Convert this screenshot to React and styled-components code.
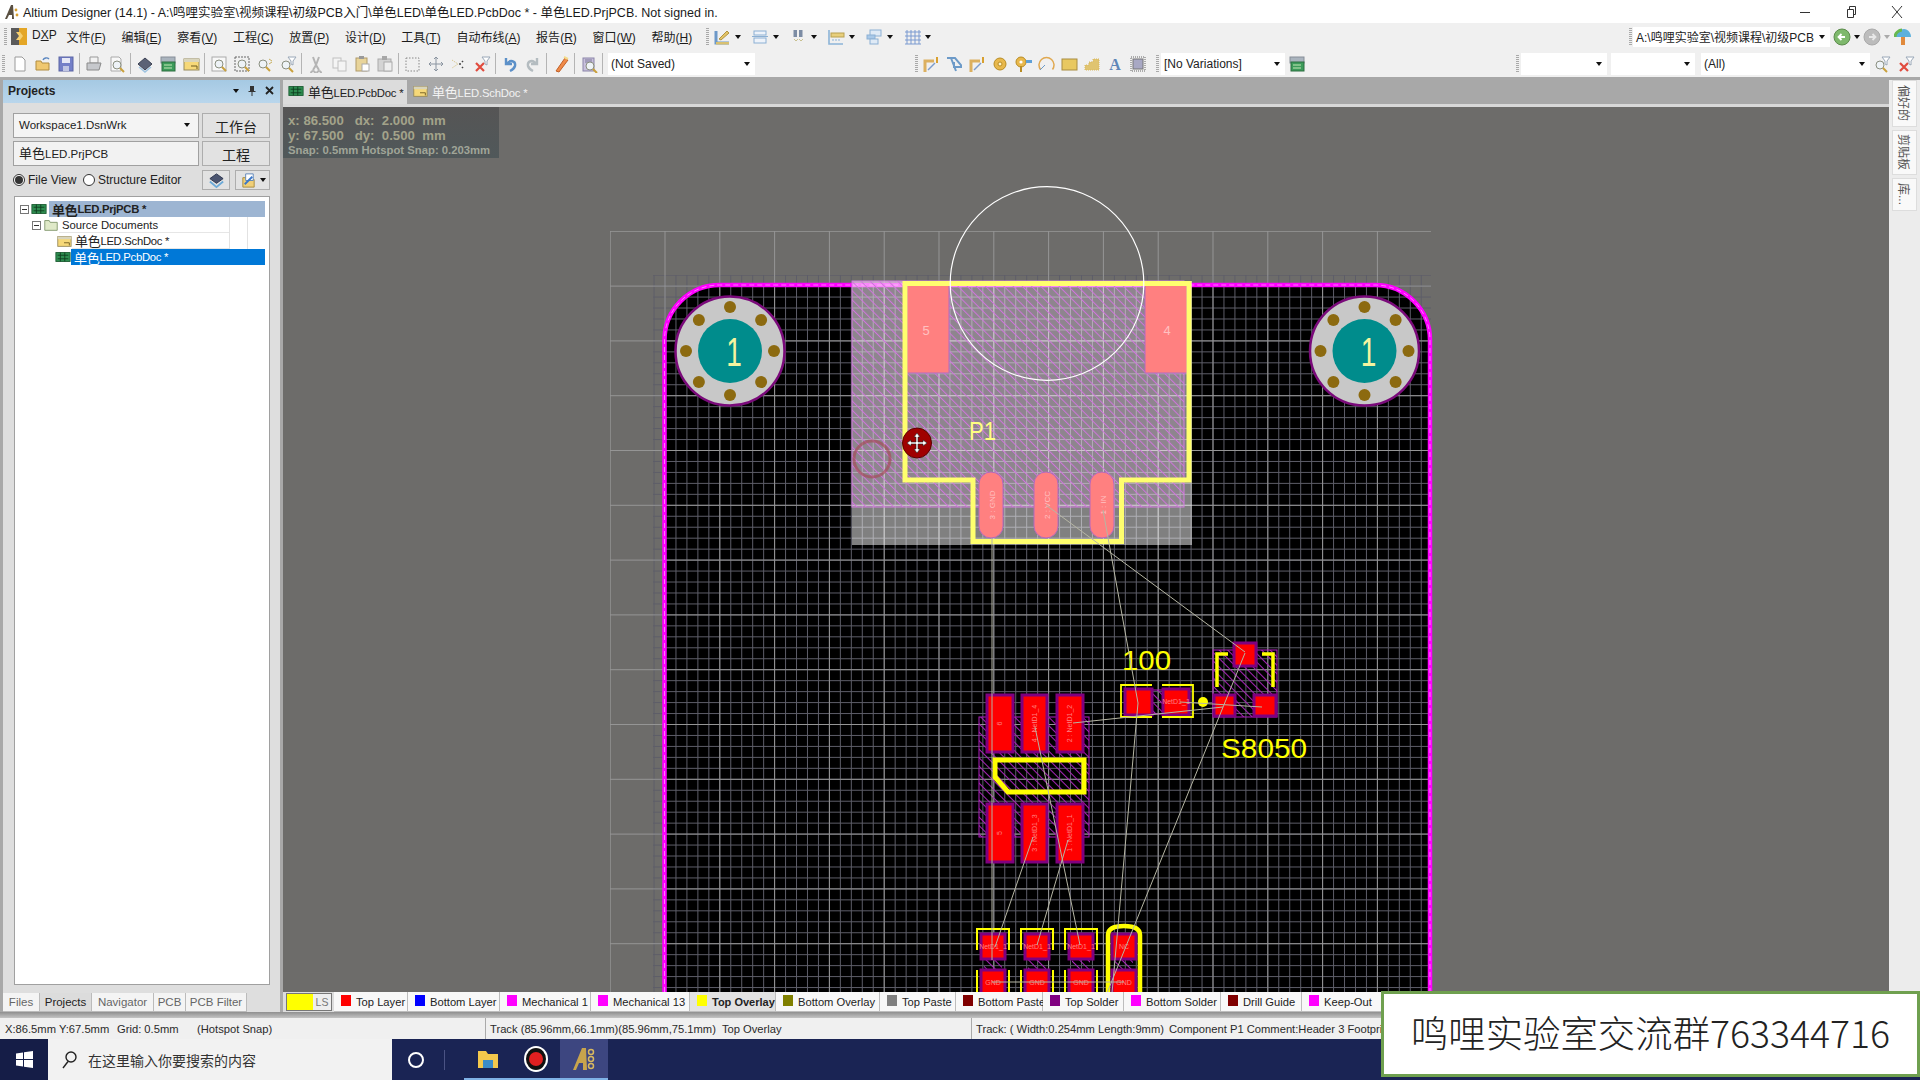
import styled, { createGlobalStyle } from "styled-components";

const Global = createGlobalStyle`
  html, body { margin: 0; padding: 0; overflow: hidden; background: #f0f0f0; }
  * { box-sizing: border-box; }
  body { font-family: "Liberation Sans", "Noto Sans CJK SC", sans-serif; font-size: 12px; color: #222; }
`;

const Page = styled.div`
  width: 1920px;
  height: 1080px;
  position: relative;
  display: flex;
  flex-direction: column;
  overflow: hidden;
`;

const TitleBar = styled.div`
  height: 23px;
  background: #fff;
  display: flex;
  align-items: center;
  padding-left: 4px;
  font-size: 12.5px;
  color: #1a1a1a;
  white-space: nowrap;
`;
const TitleText = styled.span`
  margin-left: 4px;
  flex: 1;
`;
const WinButton = styled.div`
  width: 46px;
  display: flex;
  justify-content: center;
`;

const Bar = styled.div`
  height: 27px;
  background: #f0f0f0;
  display: flex;
  align-items: center;
  white-space: nowrap;
`;
const Group = styled.div`
  display: flex;
  align-items: center;
  height: 100%;
  width: ${(p) => p.$w}px;
  flex: none;
  & > svg {
    flex: none;
  }
`;
const Grip = styled.div`
  width: 3px;
  height: 18px;
  flex: none;
  margin: 0 ${(p) => p.$right || 3}px 0 ${(p) => p.$left || 3}px;
  background: repeating-linear-gradient(to bottom, #a9a9a9 0 1px, #f0f0f0 1px 2px);
`;
const Tool = styled.div`
  width: ${(p) => p.$w || 23}px;
  height: 20px;
  flex: none;
  display: flex;
  align-items: center;
  justify-content: center;
`;
const Sep = styled.div`
  width: 5px;
  height: 21px;
  flex: none;
  &::after {
    content: "";
    display: block;
    width: 1px;
    height: 100%;
    margin-left: 2px;
    background: #b4b4b4;
  }
`;
const Caret = styled.span`
  width: 0;
  height: 0;
  flex: none;
  display: inline-block;
  border-left: 3px solid transparent;
  border-right: 3px solid transparent;
  border-top: 4px solid ${(p) => p.$color || "#111"};
`;
const MenuList = styled.div`
  display: flex;
  flex: none;
  gap: 15.7px;
  margin-left: 5px;
  color: #1c1c1c;
`;
const DxpLabel = styled.span`
  margin-right: -6px;
`;
const Combo = styled.div`
  width: ${(p) => p.$w}px;
  height: ${(p) => p.$h || 22}px;
  flex: none;
  margin-left: ${(p) => p.$ml || 0}px;
  background: #fff;
  display: flex;
  align-items: center;
  justify-content: space-between;
  padding: 0 5px 0 3px;
  font-size: 12px;
  color: #222;
`;

const Workspace = styled.div`
  height: 935px;
  display: flex;
  background: #a8a8a8;
`;
const LeftDock = styled.div`
  width: 283px;
  flex: none;
  padding: 3px 3px 0;
  display: flex;
  flex-direction: column;
`;
const PanelHead = styled.div`
  height: 23px;
  flex: none;
  background: linear-gradient(#a5c9e3, #b9d6ec);
  display: flex;
  align-items: center;
  padding: 0 6px 2px 5px;
  font-weight: bold;
  color: #222;
`;
const PanelTitle = styled.span`
  flex: 1;
`;
const HeadGlyphs = styled.div`
  display: flex;
  align-items: center;
  gap: 8px;
`;
const PanelBody = styled.div`
  flex: 1;
  background: #dedede;
  padding: 10px 10px 8px;
  display: flex;
  flex-direction: column;
  gap: 3px;
`;
const FormRow = styled.div`
  height: ${(p) => p.$h || 25}px;
  flex: none;
  display: flex;
  gap: 3px;
`;
const Field = styled.div`
  width: 186px;
  background: ${(p) => (p.$plain ? "#f2f2f2" : "#f4f4f4")};
  border: 1px solid #a0a0a0;
  display: flex;
  align-items: center;
  justify-content: space-between;
  padding: 0 8px 2px 5px;
  font-size: 11.5px;
`;
const PanelBtn = styled.div`
  width: ${(p) => p.$w || 68}px;
  background: #e2e2e2;
  border: 1px solid #adadad;
  display: flex;
  align-items: center;
  justify-content: center;
  gap: 3px;
  font-size: ${(p) => p.$fs || 14}px;
`;
const RadioRow = styled.div`
  height: 20px;
  flex: none;
  margin-top: 1px;
  display: flex;
  align-items: center;
`;
const Radio = styled.span`
  width: 12px;
  height: 12px;
  border-radius: 50%;
  border: 1px solid #333;
  background: #fff;
  flex: none;
  display: flex;
  align-items: center;
  justify-content: center;
  margin-right: 3px;
  &::after {
    content: "";
    width: 8px;
    height: 8px;
    border-radius: 50%;
    background: ${(p) => (p.$on ? "#333" : "transparent")};
  }
`;
const RadioLabel = styled.span`
  width: ${(p) => p.$w}px;
  flex: none;
`;
const RadioButtons = styled.div`
  margin-left: auto;
  height: 100%;
  display: flex;
  gap: 5px;
`;
const Tree = styled.div`
  flex: 1;
  width: 256px;
  align-self: flex-end;
  margin-top: 3px;
  background: #fff;
  border: 1px solid #a0a0a0;
  padding: 4px 4px 0 5px;
  font-size: 11.3px;
`;
const TreeRow = styled.div`
  height: 16px;
  display: flex;
  align-items: center;
  padding-left: ${(p) => p.$indent}px;
  white-space: nowrap;
`;
const Expander = styled.span`
  width: 9px;
  height: 9px;
  flex: none;
  border: 1px solid #777;
  margin-right: 2px;
  position: relative;
  &::after {
    content: "";
    position: absolute;
    left: 1px;
    right: 1px;
    top: 3px;
    height: 1px;
    background: #333;
  }
`;
const TreeLabel = styled.div`
  flex: 1;
  height: 100%;
  display: flex;
  align-items: center;
  padding-left: 3px;
  margin-left: ${(p) => p.$ml || 0}px;
  font-weight: ${(p) => (p.$bold ? "bold" : "normal")};
  background: ${(p) => (p.$bg ? p.$bg : "transparent")};
  color: ${(p) => (p.$fg ? p.$fg : "#222")};
  border-bottom: ${(p) => (p.$line ? "1px solid #e6e6e6" : "none")};
  letter-spacing: ${(p) => (p.$doc ? "-0.3px" : "0")};
  white-space: pre;
`;
const Cjk = styled.span`
  font-size: 13px;
`;
const Cell = styled.span`
  width: 18px;
  height: 100%;
  flex: none;
  border-left: 1px solid #e2e2e2;
`;
const DockTabs = styled.div`
  height: 19px;
  flex: none;
  display: flex;
  background: #dedede;
`;
const DockTab = styled.div`
  width: ${(p) => p.$w}px;
  flex: none;
  background: ${(p) => (p.$on ? "#dcdcdc" : "#f4f4f4")};
  color: ${(p) => (p.$on ? "#222" : "#666")};
  border-right: 1px solid #bbb;
  border-bottom: 1px solid #bbb;
  display: flex;
  align-items: center;
  justify-content: center;
  font-size: 11.5px;
`;

const DocArea = styled.div`
  flex: 1;
  display: flex;
  flex-direction: column;
  min-width: 0;
`;
const DocTabs = styled.div`
  height: 27px;
  flex: none;
  padding-top: 3px;
  display: flex;
`;
const DocTab = styled.div`
  width: ${(p) => p.$w}px;
  flex: none;
  background: ${(p) => (p.$on ? "#dcdcdc" : "transparent")};
  color: ${(p) => (p.$on ? "#222" : "#f2f2f2")};
  display: flex;
  align-items: center;
  gap: 4px;
  padding: 0 0 2px 5px;
  font-size: 11.3px;
  white-space: pre;
`;
const DocLabel = styled.span`
  white-space: pre;
  letter-spacing: -0.2px;
`;
const Strip = styled.div`
  height: 3px;
  flex: none;
  background: #d8d8d8;
`;
const Canvas = styled.div`
  flex: 1;
  position: relative;
  background: #6d6c6a;
  overflow: hidden;
`;
const BoardSvg = styled.svg`
  display: block;
  width: 1606px;
  height: 885px;
`;
const Readout = styled.div`
  position: absolute;
  left: 0;
  top: 0;
  width: 216px;
  height: 51px;
  padding: 6px 0 0 5px;
  background: linear-gradient(#565555, #50585a);
  color: #a3a38a;
  font-weight: bold;
  font-size: 13.2px;
  line-height: 15px;
`;
const ReadoutLine = styled.div`
  white-space: pre;
`;
const ReadoutHint = styled.div`
  font-size: 11.3px;
  line-height: 13px;
  margin-top: 1px;
  color: #a0a598;
`;
const LayerBar = styled.div`
  height: 20px;
  flex: none;
  background: #dcdcdc;
  display: flex;
  padding-left: 3px;
  white-space: nowrap;
`;
const LsBox = styled.div`
  width: 46px;
  height: 18px;
  flex: none;
  margin-top: 1px;
  margin-right: 2px;
  display: flex;
  border: 1px solid #777;
  background: #eee;
`;
const LsColor = styled.div`
  width: 26px;
  background: #ffff00;
`;
const LsText = styled.div`
  flex: 1;
  font-size: 10.5px;
  color: #777;
  display: flex;
  align-items: center;
  justify-content: center;
`;
const LayerTab = styled.div`
  width: ${(p) => p.$w}px;
  flex: none;
  display: flex;
  align-items: center;
  gap: 5px;
  padding: 1px 0 0 7px;
  background: ${(p) => (p.$on ? "#e2e2e2" : "#f8f8f8")};
  border-right: 1px solid #bdbdbd;
  border-bottom: 1px solid #bdbdbd;
  font-size: ${(p) => (p.$on ? "11px" : "11.2px")};
  font-weight: ${(p) => (p.$on ? "bold" : "normal")};
`;
const Swatch = styled.span`
  width: 10px;
  height: 11px;
  flex: none;
  margin-top: -3px;
  background: ${(p) => p.$c};
`;
const RightDock = styled.div`
  width: 31px;
  flex: none;
  margin-top: 3px;
  background: #ececec;
  padding: 0 3px;
  display: flex;
  flex-direction: column;
  gap: 3px;
`;
const SideTab = styled.div`
  height: ${(p) => p.$h}px;
  background: #f9f9f9;
  border: 1px solid #dddddd;
  display: flex;
  align-items: center;
  justify-content: center;
  font-size: 12px;
  color: #555;
  writing-mode: vertical-rl;
  text-orientation: sideways;
`;

const Divider = styled.div`
  height: 6px;
  flex: none;
  background: linear-gradient(#8f8f8f, #c4c4c4);
`;
const StatusBar = styled.div`
  height: 21px;
  flex: none;
  background: #f0f0f0;
  display: flex;
  align-items: center;
  font-size: 11.2px;
  white-space: nowrap;
  overflow: hidden;
  color: #2a2a2a;
`;
const StatusCell = styled.div`
  width: ${(p) => p.$w}px;
  flex: none;
  height: 100%;
  display: flex;
  align-items: center;
  padding-left: ${(p) => p.$pad || 0}px;
  border-right: ${(p) => (p.$edge ? "1px solid #aaa" : "none")};
`;

const Taskbar = styled.div`
  height: 41px;
  flex: none;
  background: #1a2454;
  display: flex;
  align-items: stretch;
`;
const StartBtn = styled.div`
  width: 48px;
  background: #151d47;
  display: flex;
  align-items: center;
  justify-content: center;
`;
const SearchBox = styled.div`
  width: 344px;
  background: #f2f2f2;
  display: flex;
  align-items: center;
  gap: 11px;
  padding-left: 13px;
  font-size: 14px;
  color: #333;
`;
const TaskSlot = styled.div`
  width: ${(p) => p.$w || 48}px;
  display: flex;
  align-items: center;
  justify-content: center;
  background: ${(p) => (p.$on ? "#3d4680" : "transparent")};
  border-bottom: ${(p) => (p.$run ? "2px solid #7fb2e6" : "none")};
`;
const TaskDivider = styled.div`
  width: 1px;
  height: 20px;
  align-self: center;
  background: #4b5384;
  margin: 0 19px 0 4px;
`;
const Watermark = styled.div`
  position: absolute;
  left: 1381px;
  top: 991px;
  width: 539px;
  height: 86px;
  background: #fff;
  border: 3px solid #6fa04f;
  padding-bottom: 4px;
  display: flex;
  align-items: center;
  justify-content: center;
  font-family: "Noto Sans CJK SC", "Liberation Sans", sans-serif;
  font-size: 37.4px;
  font-weight: 300;
  color: #222;
  white-space: nowrap;
`;

const Mag = ({ x = 9, y = 9 }) => (
  <g>
    <circle cx={x} cy={y} r="4" fill="#eef3f7" stroke="#8a8f80" />
    <path d={`M${x + 3} ${y + 3}l4 4`} stroke="#c9a03c" strokeWidth="2" />
  </g>
);
const Funnel = ({ c = "#9aa8b8" }) => <path d="M9 2h8l-3 4v4l-2-1V6z" fill="#fff" stroke={c} />;

const icons = {
  new: <path d="M4 2h7l3 3v11H4z" fill="#fff" stroke="#9a9a9a" />,
  open: (
    <g>
      <path d="M2 6h5l1 2h7v7H2z" fill="#f0c870" stroke="#b08c40" />
      <path d="M9 5c1-2 4-3 6-1" fill="none" stroke="#5a86c0" strokeWidth="1.4" />
    </g>
  ),
  save: (
    <g>
      <rect x="2" y="2" width="14" height="14" fill="#7480c8" stroke="#5a64a4" />
      <rect x="5" y="3" width="8" height="5" fill="#e6e8f6" />
      <rect x="6" y="11" width="6" height="5" fill="#c0c6e4" />
    </g>
  ),
  print: (
    <g>
      <path d="M5 2h8v6H5z" fill="#f2f2f2" stroke="#999" />
      <path d="M2 8h14l-2 7H2z" fill="#c6c8cc" stroke="#8a8a8a" />
    </g>
  ),
  preview: (
    <g>
      <path d="M3 2h8l2 2v12H3z" fill="#f8f8f8" stroke="#aaa" />
      <Mag x={9} y={10} />
    </g>
  ),
  layers: (
    <g>
      <path d="M9 3l7 6-7 6-7-6z" fill="#5b6276" stroke="#3c4254" />
      <path d="M3 12l6 5 6-5" fill="none" stroke="#9ec3e0" strokeWidth="1.4" />
    </g>
  ),
  pcb: (
    <g>
      <rect x="2" y="2" width="14" height="6" fill="#aab4be" stroke="#868e98" />
      <rect x="3" y="7" width="13" height="9" fill="#3c9b5a" stroke="#2c6e40" />
      <path d="M5 10h8M5 13h8" stroke="#c6e8b8" />
    </g>
  ),
  pcbSmall: (
    <g>
      <rect x="1" y="4" width="16" height="10" fill="#2e8d50" stroke="#1c5c32" />
      <path d="M3 7h12M3 11h12M6 4v10M11 4v10" stroke="#0f3d1e" />
    </g>
  ),
  sch: (
    <g>
      <rect x="2" y="4" width="15" height="11" fill="#f6d878" stroke="#96895a" />
      <rect x="2" y="4" width="15" height="3" fill="#d8d4bc" />
      <path d="M9 11h6v3" fill="none" stroke="#6d5a20" />
    </g>
  ),
  folder: <path d="M2 4h5l1 2h8v9H2z" fill="#dfe9c8" stroke="#80966a" />,
  zoomA: (
    <g>
      <rect x="2" y="2" width="14" height="14" fill="#f8f8f8" stroke="#aaa" />
      <Mag />
    </g>
  ),
  zoomB: (
    <g>
      <rect x="2" y="2" width="14" height="14" fill="none" stroke="#666" strokeDasharray="2 1" />
      <Mag />
    </g>
  ),
  zoomC: (
    <g>
      <Mag x={7} y={9} />
      <path d="M13 4l3 2M13 9l3-2" stroke="#c8b060" fill="none" />
    </g>
  ),
  zoomD: (
    <g>
      <Mag x={7} y={10} />
      <Funnel />
    </g>
  ),
  zoomRed: (
    <g>
      <path d="M3 8l8 8M11 8l-8 8" stroke="#e04b3e" strokeWidth="2.2" />
      <Funnel />
    </g>
  ),
  cut: <path d="M6 2l3 8 3-8M6 16a2 2 0 1 0 .1 0M12 16a2 2 0 1 0 .1 0M9 10l-3 5M9 10l3 5" fill="none" stroke="#b4b4b4" strokeWidth="2" />,
  copy: (
    <g>
      <rect x="3" y="3" width="8" height="10" fill="#f4f4f4" stroke="#c0c0c0" />
      <rect x="8" y="6" width="8" height="10" fill="#f4f4f4" stroke="#c0c0c0" />
    </g>
  ),
  paste: (
    <g>
      <rect x="3" y="3" width="11" height="13" fill="#e8d49a" stroke="#b09a68" />
      <rect x="9" y="9" width="7" height="7" fill="#fff" stroke="#aaa" />
      <rect x="6" y="1" width="5" height="3" fill="#999" />
    </g>
  ),
  pasteB: (
    <g>
      <rect x="2" y="4" width="13" height="12" fill="#d4d4d4" stroke="#aaa" />
      <rect x="6" y="1" width="5" height="4" fill="#a8a8a8" />
      <rect x="8" y="7" width="8" height="9" fill="#eee" stroke="#aaa" />
    </g>
  ),
  select: <rect x="2" y="3" width="13" height="13" fill="none" stroke="#888" strokeDasharray="1.5 1.5" />,
  move: <path d="M9 2v14M2 9h14M7 4l2-2 2 2M7 14l2 2 2-2M4 7L2 9l2 2M14 7l2 2-2 2" fill="none" stroke="#8a94a0" />,
  deselect: (
    <g>
      <path d="M2 5l6 4-6 4" fill="none" stroke="#d8c890" strokeDasharray="1.5 1" />
      <path d="M12 6l1 1M12 12l1 1M9 9l2 0" stroke="#444" strokeWidth="1.6" />
    </g>
  ),
  undo: <path d="M5 3v6h6M6 9c3-5 9-3 8 2-1 3-3 4-5 5" fill="none" stroke="#5c90c8" strokeWidth="2.4" />,
  redo: <path d="M13 3v6H7M12 9C9 4 3 6 4 11c1 3 3 4 5 5" fill="none" stroke="#b4bcc0" strokeWidth="2.4" />,
  pen: (
    <g>
      <path d="M4 16l9-13 3 2-9 12z" fill="#f08a48" stroke="#c06028" />
      <path d="M12 2l4 2" stroke="#f4dc8c" strokeWidth="2" />
    </g>
  ),
  iso: (
    <g>
      <rect x="3" y="3" width="11" height="13" fill="#c8c0dc" stroke="#8a84a8" />
      <path d="M5 5h7M5 7h7" stroke="#7c7898" />
      <Mag x={10} y={11} />
    </g>
  ),
  ruler: (
    <g>
      <path d="M3 3v12h13" fill="none" stroke="#6c98c8" strokeWidth="3" />
      <path d="M6 11l8-8 2 2-8 7z" fill="#e4c468" stroke="#b09440" />
      <rect x="3" y="14" width="13" height="2.5" fill="#d8c070" />
    </g>
  ),
  align: (
    <g>
      <rect x="3" y="3" width="12" height="4" fill="#eef3fa" stroke="#8cb0d4" />
      <rect x="3" y="10" width="12" height="5" fill="#eef3fa" stroke="#8cb0d4" />
      <path d="M1 8.5h16" stroke="#8cb0d4" />
    </g>
  ),
  binoc: (
    <g>
      <rect x="4.500" y="2" width="3.500" height="7" fill="#7c8ca4" />
      <rect x="10" y="2" width="3.500" height="7" fill="#7c8ca4" />
      <path d="M5 11l2 2 2-2M10 11l2 2 2-2" fill="none" stroke="#c8c090" />
    </g>
  ),
  measure: (
    <g>
      <path d="M2 2v14h14" fill="none" stroke="#8cb4d8" strokeWidth="1.6" />
      <rect x="4" y="5" width="13" height="4" fill="#e8cf7c" stroke="#b8a050" />
      <path d="M5 12h8" stroke="#8cb4d8" strokeDasharray="2 1" />
    </g>
  ),
  stack: (
    <g>
      <rect x="5" y="2" width="11" height="6" fill="#dfeaf6" stroke="#8cb0d4" />
      <rect x="2" y="7" width="8" height="4" fill="#a8c8e8" stroke="#8cb0d4" />
      <rect x="5" y="11" width="8" height="5" fill="#dfeaf6" stroke="#8cb0d4" />
    </g>
  ),
  grid: <path d="M4 2v14M8 2v14M12 2v14M16 2v14M2 4h16M2 8h16M2 12h16M2 16h16" stroke="#7a9ad0" fill="none" />,
  routeA: (
    <g>
      <path d="M3 17V6h9" fill="none" stroke="#dcb060" strokeWidth="3" />
      <path d="M6 15L13 8" stroke="#7c9ccc" strokeWidth="1.5" />
      <path d="M15 2v6" stroke="#d8a030" strokeWidth="2" />
    </g>
  ),
  routeB: <path d="M2 3h8l6 7v2H9v-5M6 3l5 13" fill="none" stroke="#6c9ac8" strokeWidth="2" />,
  viaPad: (
    <g>
      <circle cx="9" cy="9" r="6" fill="#e8b84c" stroke="#b88c24" />
      <circle cx="9" cy="9" r="2" fill="#fff3c8" stroke="#b88c24" />
    </g>
  ),
  via: (
    <g>
      <circle cx="7" cy="7" r="5" fill="#e8b84c" stroke="#b88c24" />
      <circle cx="7" cy="7" r="1.6" fill="#fff" />
      <rect x="6" y="11" width="2" height="6" fill="#b88c24" />
      <rect x="12" y="5" width="6" height="3" fill="#5fa0d8" />
    </g>
  ),
  arc: (
    <g>
      <path d="M3.500 14.500a7.500 7.500 0 1 1 12 0" fill="none" stroke="#e0a850" strokeWidth="1.5" />
      <path d="M3 15l5-5" stroke="#6c9ac8" />
    </g>
  ),
  fill: <rect x="2" y="4" width="15" height="11" fill="#e8c860" stroke="#a88c40" />,
  poly: <path d="M2 15V10h4V7h4V4h6v11z" fill="#e0c470" stroke="#d8b860" strokeDasharray="1 1" />,
  textA: <text x="9" y="15" textAnchor="middle" fontSize="16" fontFamily="Liberation Serif, serif" fontWeight="bold" fill="#5f86b8">A</text>,
  chip: (
    <g>
      <rect x="4" y="4" width="10" height="10" fill="#a8a8c4" stroke="#777" />
      <rect x="2" y="2" width="14" height="14" fill="none" stroke="#666" strokeDasharray="1 1" />
    </g>
  ),
  filterMag: (
    <g>
      <Mag x={7} y={10} />
      <Funnel />
    </g>
  ),
  back: (
    <g>
      <circle cx="9" cy="9" r="8" fill="#7eb86c" stroke="#5c8c4c" />
      <path d="M12 9H6M8.5 6L5.5 9l3 3" fill="none" stroke="#fff" strokeWidth="1.8" />
    </g>
  ),
  forward: (
    <g>
      <circle cx="9" cy="9" r="8" fill="#bcbcbc" stroke="#aaa" />
      <path d="M6 9h6M9.5 6l3 3-3 3" fill="none" stroke="#e8e8e8" strokeWidth="1.8" />
    </g>
  ),
  home: (
    <g>
      <path d="M1 9c0-5 5-8 9-8s7 4 7 8z" fill="#5cb0dc" />
      <path d="M1 9c0-4 4-7 7-7" fill="none" stroke="#68b850" strokeWidth="3" />
      <rect x="7" y="9" width="4" height="8" fill="#e08a3c" />
    </g>
  ),
  bluePage: (
    <g>
      <path d="M3 6h5l1 2h6v8H3z" fill="#f0cf78" stroke="#a88c40" />
      <path d="M6 2h8v7H6z" fill="#fff" stroke="#5f86b8" />
      <path d="M5 13L13 5" stroke="#3c78c8" strokeWidth="2" />
    </g>
  ),
  stackBook: (
    <g>
      <path d="M9 2l7 5-7 5-7-5z" fill="#4a5470" stroke="#2c344c" />
      <path d="M2 10l7 6 7-6" fill="none" stroke="#6caad8" strokeWidth="2" />
    </g>
  ),
};

const Icon = ({ name, size = 18 }) => (
  <svg width={size} height={size} viewBox="0 0 18 18">
    {icons[name]}
  </svg>
);

const Tools = ({ names, w }) =>
  names.map((n) => (
    <Tool key={n} $w={w}>
      <Icon name={n} />
    </Tool>
  ));

const menus = [
  ["文件", "F"],
  ["编辑", "E"],
  ["察看", "V"],
  ["工程", "C"],
  ["放置", "P"],
  ["设计", "D"],
  ["工具", "T"],
  ["自动布线", "A"],
  ["报告", "R"],
  ["窗口", "W"],
  ["帮助", "H"],
];

const layers = [
  ["Top Layer", "#ff0000", 74],
  ["Bottom Layer", "#0000ff", 92],
  ["Mechanical 1", "#ff00ff", 91],
  ["Mechanical 13", "#ff00ff", 99],
  ["Top Overlay", "#ffff00", 86, true],
  ["Bottom Overlay", "#808000", 104],
  ["Top Paste", "#808080", 76],
  ["Bottom Paste", "#800000", 87],
  ["Top Solder", "#800080", 81],
  ["Bottom Solder", "#ff00ff", 97],
  ["Drill Guide", "#800000", 81],
  ["Keep-Out", "#ff00ff", 80],
];

const Pad = ({ x, y, w, h, label, rotate }) => (
  <g>
    <rect x={x} y={y} width={w} height={h} fill="#ff0000" stroke="#800080" strokeWidth="3" />
    {label && (
      <text
        x={x + w / 2}
        y={y + h / 2 + 2}
        fontSize="7"
        textAnchor="middle"
        fill="#ff8080"
        fontFamily="Liberation Sans, sans-serif"
        transform={rotate ? `rotate(-90 ${x + w / 2} ${y + h / 2})` : undefined}
      >
        {label}
      </text>
    )}
  </g>
);

const MountHole = ({ cx, cy }) => (
  <g>
    <circle cx={cx} cy={cy} r="54.5" fill="#c8c8c8" stroke="#7a0a7a" strokeWidth="2.5" />
    {[0, 1, 2, 3, 4, 5, 6, 7].map((i) => (
      <circle
        key={i}
        cx={cx + 44 * Math.cos((i * Math.PI) / 4)}
        cy={cy + 44 * Math.sin((i * Math.PI) / 4)}
        r="6"
        fill="#8c6a10"
      />
    ))}
    <circle cx={cx} cy={cy} r="32" fill="#008c8c" />
    <text
      textAnchor="middle"
      fontSize="40"
      fill="#f4f4a0"
      fontFamily="Liberation Sans, sans-serif"
      transform={`translate(${cx + 4} ${cy + 15}) scale(0.7 1)`}
    >
      1
    </text>
  </g>
);

const ratsnest = [
  [992, 538, 992, 960],
  [1046, 505, 1245, 652],
  [1103, 510, 1138, 703],
  [1138, 703, 1112, 993],
  [1245, 653, 1107, 993],
  [1073, 723, 1223, 707],
  [1180, 702, 1262, 707],
  [1035, 727, 1080, 945],
  [1033, 837, 995, 947],
  [1068, 840, 1037, 945],
  [992, 982, 1124, 982],
];

const Board = () => (
  <BoardSvg viewBox="283 107 1606 885">
    <defs>
      <pattern id="fine" x="664.5" y="285.6" width="10.96" height="10.96" patternUnits="userSpaceOnUse">
        <path d="M0 0.5H10.96M0.5 0V10.96" stroke="#5d5d68" strokeWidth="1" fill="none" />
      </pattern>
      <pattern id="coarse" x="664.5" y="285.6" width="54.8" height="54.8" patternUnits="userSpaceOnUse">
        <path d="M0 0.5H54.8M0.5 0V54.8" stroke="#959595" strokeWidth="1" fill="none" />
      </pattern>
      <pattern id="hatchPink" width="6.500" height="6.500" patternUnits="userSpaceOnUse" patternTransform="rotate(-45)">
        <path d="M0 0V6.500" stroke="#cf74dc" strokeWidth="2" />
      </pattern>
      <pattern id="hatchDark" width="6" height="6" patternUnits="userSpaceOnUse" patternTransform="rotate(-45)">
        <path d="M0 0V6" stroke="#a826b8" strokeWidth="2" />
      </pattern>
    </defs>

    <path d="M664.5 1000V340A55 55 0 0 1 719.5 285H1375A55 55 0 0 1 1430 340V1000Z" fill="#000" />
    <rect x="653" y="275" width="778" height="720" fill="url(#fine)" shapeRendering="crispEdges" />
    <rect x="609.7" y="230.8" width="821" height="765" fill="url(#coarse)" shapeRendering="crispEdges" />
    <path d="M664.5 1000V340A55 55 0 0 1 719.5 285H1375A55 55 0 0 1 1430 340V1000" fill="none" stroke="#ff00ff" strokeWidth="4.500" />
    <path d="M664.5 1000V340A55 55 0 0 1 719.5 285H1375A55 55 0 0 1 1430 340V1000" fill="none" stroke="#fff" strokeOpacity="0.6" strokeWidth="0.8" strokeDasharray="5 3" />

    <rect x="852" y="281" width="340" height="264" fill="#fff" fillOpacity="0.5" />
    <rect x="852" y="281" width="332" height="226" fill="#e0a0e0" fillOpacity="0.15" />
    <rect x="852" y="281" width="332" height="226" fill="url(#hatchPink)" stroke="#d47ee0" />

    <rect x="907" y="285" width="42" height="88" fill="#ff8080" stroke="#b468c0" />
    <rect x="1145" y="285" width="42" height="88" fill="#ff8080" stroke="#b468c0" />
    <text x="926" y="335" fontSize="13" textAnchor="middle" fill="#ffc0c0" fontFamily="Liberation Sans, sans-serif">5</text>
    <text x="1167" y="335" fontSize="13" textAnchor="middle" fill="#ffc0c0" fontFamily="Liberation Sans, sans-serif">4</text>
    {[979, 1034, 1090].map((x, i) => (
      <g key={x}>
        <rect x={x} y="472" width="24" height="66" rx="12" fill="#ff8080" stroke="#b468c0" />
        <text
          x={x + 12}
          y="509"
          fontSize="8"
          textAnchor="middle"
          fill="#ffc0c0"
          fontFamily="Liberation Sans, sans-serif"
          transform={`rotate(-90 ${x + 12} 505)`}
        >
          {["3 : GND", "2 : VCC", "1 : IN"][i]}
        </text>
      </g>
    ))}
    <path d="M905 283.5H1189V480H1121.5V541.5H973V480H905Z" fill="none" stroke="#ffff6e" strokeWidth="5" />
    <text x="969" y="440" fontSize="26" textLength="27" lengthAdjust="spacingAndGlyphs" fill="#ffff80" fontFamily="Liberation Sans, sans-serif">P1</text>
    <circle cx="1047" cy="283.5" r="96.8" fill="none" stroke="#fff" strokeWidth="1.2" />
    <circle cx="872" cy="459" r="18" fill="none" stroke="#a84a58" strokeOpacity="0.65" strokeWidth="3" />

    <MountHole cx={730} cy={351} />
    <MountHole cx={1364.5} cy={351} />

    <rect x="979" y="717" width="110" height="120" fill="url(#hatchDark)" stroke="#b020c0" />
    <Pad x={987} y={695} w={26} h={57} label="6" rotate />
    <Pad x={1022} y={695} w={25} h={57} label="4 : NetD1_4" rotate />
    <Pad x={1057} y={695} w={26} h={57} label="2 : NetD1_2" rotate />
    <Pad x={987} y={804} w={26} h={58} label="5" rotate />
    <Pad x={1022} y={804} w={25} h={58} label="3 : NetD1_3" rotate />
    <Pad x={1057} y={804} w={26} h={58} label="1 : NetD1_1" rotate />
    <path d="M995 760H1084V792H1008L995 777Z" fill="none" stroke="#ffff00" strokeWidth="5" />

    <rect x="1150" y="690" width="14" height="24" fill="url(#hatchDark)" stroke="#b020c0" />
    <Pad x={1125} y={689} w={27} h={26} />
    <Pad x={1163} y={689} w={26} h={26} label="NetD1_1" />
    <path d="M1152 685H1121V717H1152M1162 685H1193V717H1162" fill="none" stroke="#ffff00" strokeWidth="1.8" />
    <text x="1122" y="670" fontSize="27" textLength="49" lengthAdjust="spacingAndGlyphs" fill="#ffff00" fontFamily="Liberation Sans, sans-serif">100</text>
    <circle cx="1203" cy="702" r="5" fill="#ffff00" />

    <rect x="1213" y="650" width="64" height="67" fill="url(#hatchDark)" stroke="#b020c0" />
    <Pad x={1234} y={643} w={22} h={23} />
    <Pad x={1214} y={695} w={21} h={21} />
    <Pad x={1254} y={695} w={22} h={21} />
    <path d="M1228 654H1217V687M1262 654H1273V687" fill="none" stroke="#ffff00" strokeWidth="3.5" />
    <text x="1221" y="758" fontSize="28" textLength="86" lengthAdjust="spacingAndGlyphs" fill="#ffff00" fontFamily="Liberation Sans, sans-serif">S8050</text>

    {[993, 1037, 1081, 1124].map((x) => (
      <g key={x}>
        <rect x={x - 9} y="955" width="18" height="20" fill="url(#hatchDark)" />
        <Pad x={x - 12} y={934} w={24} h={25} label={x === 1124 ? "NC" : "NetD1_1"} />
        <Pad x={x - 12} y={970} w={24} h={25} label="GND" />
      </g>
    ))}
    <path d="M977 950V929H1009V950M977 970V995M1009 970V995M1021 950V929H1053V950M1021 970V995M1053 970V995M1065 950V929H1097V950M1065 970V995M1097 970V995" fill="none" stroke="#ffff00" strokeWidth="2" />
    <path d="M1108 995V935Q1108 926 1124 926Q1140 926 1140 935V995" fill="none" stroke="#ffff00" strokeWidth="4.5" />

    {ratsnest.map(([x1, y1, x2, y2]) => (
      <line key={`${x1}-${y1}`} x1={x1} y1={y1} x2={x2} y2={y2} stroke="#b6b6a4" strokeWidth="1" />
    ))}

    <ellipse cx="917" cy="443" rx="14.5" ry="15" fill="#a00000" stroke="#5c0000" />
    <path d="M917 433l3 4h-2v5h5v-2l4 3-4 3v-2h-5v5h2l-3 4-3-4h2v-5h-5v2l-4-3 4-3v2h5v-5h-2z" fill="#fff" stroke="#222" strokeWidth="0.6" />
  </BoardSvg>
);

const App = () => (
  <Page>
    <Global />
    <TitleBar>
      <svg width="15" height="16" viewBox="0 0 15 16">
        <path d="M1 15L7 1h2l1 14H8V11H5l-2 4z" fill="#5a5042" />
        <circle cx="12" cy="6" r="1.4" fill="#d8a030" />
        <circle cx="13" cy="11" r="1.4" fill="#d8a030" />
      </svg>
      <TitleText>Altium Designer (14.1) - A:\鸣哩实验室\视频课程\初级PCB入门\单色LED\单色LED.PcbDoc * - 单色LED.PrjPCB. Not signed in.</TitleText>
      <WinButton>
        <svg width="12" height="12" viewBox="0 0 12 12"><path d="M1 6.5h10" stroke="#333" /></svg>
      </WinButton>
      <WinButton>
        <svg width="12" height="14" viewBox="0 0 12 14"><path d="M2.5 4.5h6v8h-6zM4.5 4V1.5h6v8H9" fill="none" stroke="#333" /></svg>
      </WinButton>
      <WinButton>
        <svg width="12" height="14" viewBox="0 0 12 14"><path d="M1 1l10 12M11 1L1 13" stroke="#333" /></svg>
      </WinButton>
    </TitleBar>

    <Bar>
      <Group $w={703}>
        <Grip $left={4} $right={4} />
        <svg width="16" height="17" viewBox="0 0 16 17">
          <rect width="8" height="17" fill="#5a5a5a" />
          <rect x="8" width="8" height="17" fill="#e4a626" />
          <path d="M5 4h4l3 4-3 4H5l3-4z" fill="#f6d070" />
        </svg>
        <MenuList>
          <DxpLabel>D<u>X</u>P</DxpLabel>
          {menus.map(([label, key]) => (
            <span key={key}>
              {label}(<u>{key}</u>)
            </span>
          ))}
        </MenuList>
      </Group>
      <Group $w={925}>
        <Grip $left={0} $right={1} />
        {["ruler", "align", "binoc", "measure", "stack", "grid"].map((n) => (
          <Tool key={n} $w={38}>
            <Icon name={n} />
            <Tool $w={14}>
              <Caret />
            </Tool>
          </Tool>
        ))}
      </Group>
      <Group $w={292}>
        <Grip $left={1} $right={1} />
        <Combo $w={197} $h={20}>
          <span>A:\鸣哩实验室\视频课程\初级PCB</span>
          <Caret />
        </Combo>
        <Tool $w={24}><Icon name="back" /></Tool>
        <Caret />
        <Tool $w={24}><Icon name="forward" /></Tool>
        <Caret $color="#aaa" />
        <Tool $w={26}><Icon name="home" /></Tool>
      </Group>
    </Bar>

    <Bar>
      <Group $w={912}>
        <Grip $left={2} $right={0} />
        <Tools names={["new", "open", "save"]} />
        <Sep />
        <Tools names={["print", "preview"]} />
        <Sep />
        <Tools names={["layers", "pcb", "sch"]} />
        <Sep />
        <Tools names={["zoomA", "zoomB", "zoomC", "zoomD"]} />
        <Sep />
        <Tools names={["cut", "copy", "paste", "pasteB"]} />
        <Sep />
        <Tools names={["select", "move", "deselect", "zoomRed"]} />
        <Sep />
        <Tools names={["undo", "redo"]} />
        <Sep />
        <Tools names={["pen"]} />
        <Sep />
        <Tools names={["iso"]} />
        <Sep />
        <Combo $w={147} $ml={3}>
          <span>(Not Saved)</span>
          <Caret />
        </Combo>
      </Group>
      <Group $w={600}>
        <Grip $left={3} $right={1} />
        <Tools names={["routeA", "routeB"]} />
        <Tool><Icon name="routeA" /></Tool>
        <Tools names={["viaPad", "via", "arc", "fill", "poly", "textA", "chip"]} />
        <Grip $left={7} $right={2} />
        <Combo $w={124}>
          <span>[No Variations]</span>
          <Caret />
        </Combo>
        <Tool><Icon name="pcb" /></Tool>
      </Group>
      <Group $w={408}>
        <Grip $left={4} $right={2} />
        <Combo $w={86}>
          <span />
          <Caret />
        </Combo>
        <Combo $w={84} $ml={4}>
          <span />
          <Caret />
        </Combo>
        <Combo $w={169} $ml={6}>
          <span>(All)</span>
          <Caret />
        </Combo>
        <Tool $w={24}><Icon name="filterMag" /></Tool>
        <Tool $w={24}><Icon name="zoomRed" /></Tool>
      </Group>
    </Bar>

    <Workspace>
      <LeftDock>
        <PanelHead>
          <PanelTitle>Projects</PanelTitle>
          <HeadGlyphs>
            <Caret />
            <svg width="10" height="12" viewBox="0 0 10 12"><path d="M3 1h4v5h1.5v1h-3v4H4.500V7h-3V6H3z" fill="#333" /></svg>
            <svg width="9" height="9" viewBox="0 0 9 9"><path d="M1 1l7 7M8 1L1 8" stroke="#222" strokeWidth="1.8" /></svg>
          </HeadGlyphs>
        </PanelHead>
        <PanelBody>
          <FormRow>
            <Field>
              <span>Workspace1.DsnWrk</span>
              <Caret />
            </Field>
            <PanelBtn>工作台</PanelBtn>
          </FormRow>
          <FormRow>
            <Field $plain>
              <span><Cjk>单色</Cjk>LED.PrjPCB</span>
            </Field>
            <PanelBtn>工程</PanelBtn>
          </FormRow>
          <RadioRow>
            <Radio $on />
            <RadioLabel $w={55}>File View</RadioLabel>
            <Radio />
            <RadioLabel $w={85}>Structure Editor</RadioLabel>
            <RadioButtons>
              <PanelBtn $w={28}><Icon name="stackBook" size={17} /></PanelBtn>
              <PanelBtn $w={35}>
                <Icon name="bluePage" size={17} />
                <Caret />
              </PanelBtn>
            </RadioButtons>
          </RadioRow>
          <Tree>
            <TreeRow $indent={0}>
              <Expander />
              <Icon name="pcbSmall" size={16} />
              <TreeLabel $ml={2} $bold $doc $bg="#9db5d2"><Cjk>单色</Cjk>LED.PrjPCB *</TreeLabel>
            </TreeRow>
            <TreeRow $indent={12}>
              <Expander />
              <Icon name="folder" size={16} />
              <TreeLabel $line>Source Documents</TreeLabel>
              <Cell />
              <Cell />
            </TreeRow>
            <TreeRow $indent={36}>
              <Icon name="sch" size={16} />
              <TreeLabel $line $doc><Cjk>单色</Cjk>LED.SchDoc *</TreeLabel>
              <Cell />
              <Cell />
            </TreeRow>
            <TreeRow $indent={35}>
              <Icon name="pcbSmall" size={16} />
              <TreeLabel $doc $bg="#0078d7" $fg="#fff"><Cjk>单色</Cjk>LED.PcbDoc *</TreeLabel>
            </TreeRow>
          </Tree>
        </PanelBody>
        <DockTabs>
          <DockTab $w={37}>Files</DockTab>
          <DockTab $w={52} $on>Projects</DockTab>
          <DockTab $w={62}>Navigator</DockTab>
          <DockTab $w={32}>PCB</DockTab>
          <DockTab $w={61}>PCB Filter</DockTab>
        </DockTabs>
      </LeftDock>

      <DocArea>
        <DocTabs>
          <DocTab $w={124} $on>
            <Icon name="pcbSmall" size={16} />
            <DocLabel><Cjk>单色</Cjk>LED.PcbDoc *</DocLabel>
          </DocTab>
          <DocTab $w={124}>
            <Icon name="sch" size={16} />
            <DocLabel><Cjk>单色</Cjk>LED.SchDoc *</DocLabel>
          </DocTab>
        </DocTabs>
        <Strip />
        <Canvas>
          <Board />
          <Readout>
            <ReadoutLine>{"x: 86.500   dx:  2.000  mm"}</ReadoutLine>
            <ReadoutLine>{"y: 67.500   dy:  0.500  mm"}</ReadoutLine>
            <ReadoutHint>Snap: 0.5mm Hotspot Snap: 0.203mm</ReadoutHint>
          </Readout>
        </Canvas>
        <LayerBar>
          <LsBox>
            <LsColor />
            <LsText>LS</LsText>
          </LsBox>
          {layers.map(([name, color, w, on]) => (
            <LayerTab key={name} $w={w} $on={on}>
              <Swatch $c={color} />
              {name}
            </LayerTab>
          ))}
        </LayerBar>
      </DocArea>

      <RightDock>
        <SideTab $h={47}>偏好的</SideTab>
        <SideTab $h={45}>剪贴板</SideTab>
        <SideTab $h={33}>库...</SideTab>
      </RightDock>
    </Workspace>

    <Divider />
    <StatusBar>
      <StatusCell $w={117} $pad={5}>X:86.5mm Y:67.5mm</StatusCell>
      <StatusCell $w={80}>Grid: 0.5mm</StatusCell>
      <StatusCell $w={289} $edge>(Hotspot Snap)</StatusCell>
      <StatusCell $w={486} $pad={4} $edge>Track (85.96mm,66.1mm)(85.96mm,75.1mm)&nbsp; Top Overlay</StatusCell>
      <StatusCell $w={197} $pad={4}>Track: ( Width:0.254mm Length:9mm)</StatusCell>
      <StatusCell $w={300}>Component P1 Comment:Header 3 Footprint</StatusCell>
    </StatusBar>

    <Taskbar>
      <StartBtn>
        <svg width="17" height="17" viewBox="0 0 17 17">
          <path d="M0 2.500l7-1v6.500H0zM8 1.300l9-1.300v8H8zM0 9h7v6.500l-7-1zM8 9h9v8l-9-1.300z" fill="#fff" />
        </svg>
      </StartBtn>
      <SearchBox>
        <svg width="16" height="20" viewBox="0 0 16 20">
          <circle cx="10" cy="7" r="5" fill="none" stroke="#222" strokeWidth="1.4" />
          <path d="M7 11.500L2 18" stroke="#222" strokeWidth="1.4" />
        </svg>
        在这里输入你要搜索的内容
      </SearchBox>
      <TaskSlot>
        <svg width="18" height="18" viewBox="0 0 18 18">
          <circle cx="9" cy="9" r="7" fill="none" stroke="#fff" strokeWidth="2" />
        </svg>
      </TaskSlot>
      <TaskDivider />
      <TaskSlot $run>
        <svg width="24" height="24" viewBox="0 0 24 24">
          <path d="M2 4h8l2 3h10v14H2z" fill="#f4c84c" />
          <rect x="7" y="13" width="10" height="8" fill="#3c8cc8" />
        </svg>
      </TaskSlot>
      <TaskSlot $run>
        <svg width="26" height="28" viewBox="0 0 26 28">
          <ellipse cx="13" cy="14" rx="12" ry="13" fill="#fff" />
          <ellipse cx="13" cy="14" rx="10" ry="11" fill="#111" />
          <circle cx="13" cy="14" r="7" fill="#e02020" />
        </svg>
      </TaskSlot>
      <TaskSlot $run $on>
        <svg width="26" height="28" viewBox="0 0 26 28">
          <path d="M2 25L11 3h4l1 22h-4v-7H8l-3 7z" fill="#c8a44c" />
          <circle cx="20" cy="7" r="2.500" fill="none" stroke="#d8b860" strokeWidth="1.5" />
          <circle cx="20" cy="14" r="2.500" fill="none" stroke="#d8b860" strokeWidth="1.5" />
          <circle cx="20" cy="21" r="2.500" fill="none" stroke="#d8b860" strokeWidth="1.5" />
        </svg>
      </TaskSlot>
    </Taskbar>

    <Watermark>鸣哩实验室交流群763344716</Watermark>
  </Page>
);

export default App;
